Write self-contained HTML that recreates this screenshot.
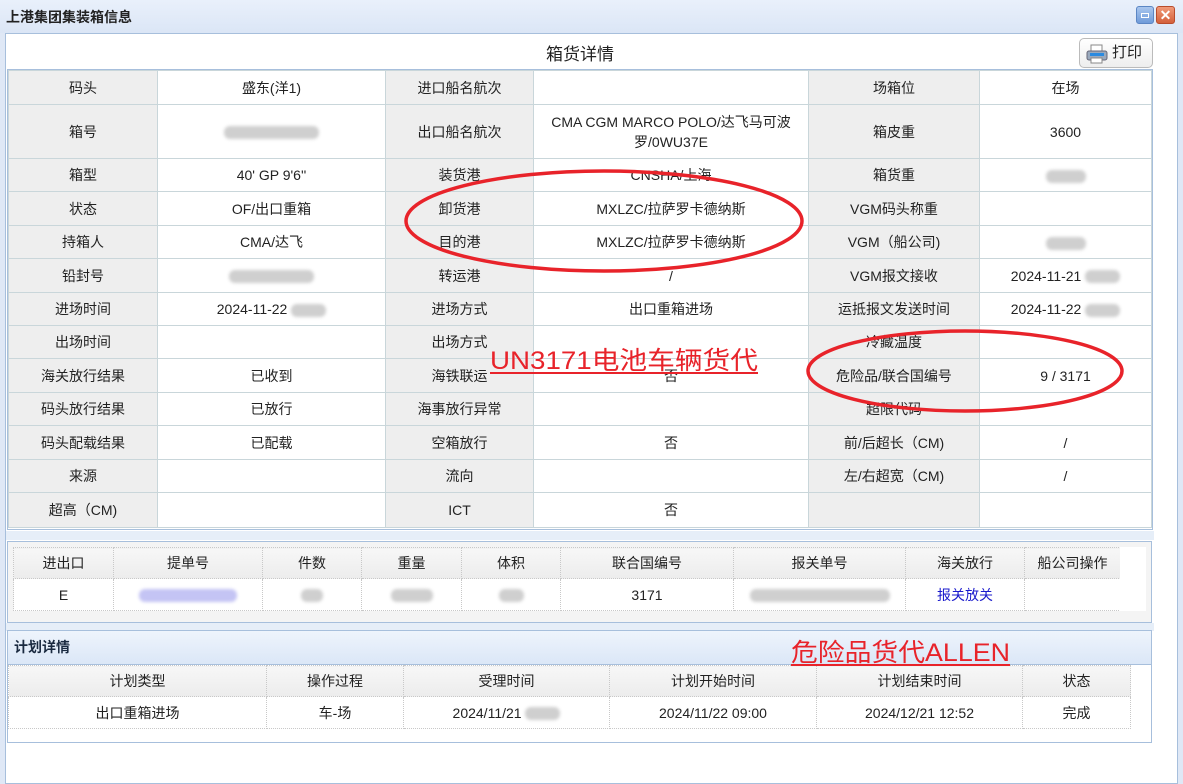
<!DOCTYPE html>
<html><head><meta charset="utf-8"><style>
*{margin:0;padding:0;box-sizing:border-box}
body{width:1183px;height:784px;overflow:hidden;background:#dfe8f6;font-family:"Liberation Sans","Noto Sans CJK SC",sans-serif;font-size:14px;color:#222;position:relative}
.abs{position:absolute}
table{border-collapse:collapse;table-layout:fixed}
#main td{border:1px solid #c9d6da;text-align:center;font-size:14px}
#main td.l{background:#eeeeee}
#main td.v{background:#fff}
.g td,.g th{border:1px dotted #c8c8c8;text-align:center;font-weight:normal;font-size:14px}
.g th{background:linear-gradient(#f7f7f7,#ececec);height:31px}
.g td{background:#fff;height:32px}
.blur{display:inline-block;height:13px;background:#cfcfcf;border-radius:6px;vertical-align:middle;filter:blur(1.5px)}
</style></head><body>
<div class="abs" style="left:0;top:0;width:1183px;height:33px;background:linear-gradient(#e9f0fb,#dbe6f6)"></div>
<div class="abs" style="left:6px;top:7px;font-size:14px;font-weight:bold;color:#222">上港集团集装箱信息</div>
<div class="abs" style="left:1136px;top:6px;width:18px;height:18px;border-radius:3px;background:linear-gradient(#a9c6ee,#6f9bd9);border:1px solid #5b86c4"><div style="margin:6px 4px;height:5px;border:1px solid #fff"></div></div>
<div class="abs" style="left:1156px;top:6px;width:19px;height:18px;border-radius:3px;background:linear-gradient(#f09a7a,#d4603b);border:1px solid #b84c2c;color:#fff;font-weight:bold;font-size:14px;line-height:16px;text-align:center">✕</div>
<div class="abs" style="left:5px;top:33px;width:1173px;height:751px;background:#fff;border:1px solid #a7bfdc"></div>
<div class="abs" style="left:6px;top:40px;width:1148px;text-align:center;font-size:17px">箱货详情</div>
<div class="abs" style="left:1079px;top:38px;width:74px;height:30px;border:1px solid #bbb;border-radius:5px;background:linear-gradient(#fff,#eee);font-size:15px;line-height:28px;padding-left:32px">打印
<svg class="abs" style="left:6px;top:5px" width="22" height="20" viewBox="0 0 22 20"><rect x="5" y="1" width="11" height="7" fill="#fff" stroke="#888"/><rect x="1" y="7" width="20" height="9" rx="2" fill="#9aa9bd" stroke="#667"/><rect x="4" y="9" width="14" height="3" fill="#2a8ae0"/><rect x="5" y="14" width="11" height="5" fill="#fff" stroke="#888"/></svg></div>
<div class="abs" style="left:7px;top:69px;width:1146px;height:461px;border:1px solid #a7bfdc"></div>
<table id="main" class="abs" style="left:8px;top:70px;width:1143px">
<colgroup><col style="width:149px"><col style="width:228px"><col style="width:148px"><col style="width:275px"><col style="width:171px"><col style="width:172px"></colgroup>
<tr style="height:34px"><td class="l">码头</td><td class="v">盛东(洋1)</td><td class="l">进口船名航次</td><td class="v"></td><td class="l">场箱位</td><td class="v">在场</td></tr>
<tr style="height:54px"><td class="l">箱号</td><td class="v"><span class="blur" style="width:95px"></span></td><td class="l">出口船名航次</td><td class="v" style="line-height:20px">CMA CGM MARCO POLO/达飞马可波<br>罗/0WU37E</td><td class="l">箱皮重</td><td class="v">3600</td></tr>
<tr style="height:33px"><td class="l">箱型</td><td class="v">40' GP 9'6''</td><td class="l">装货港</td><td class="v">CNSHA/上海</td><td class="l">箱货重</td><td class="v"><span class="blur" style="width:40px"></span></td></tr>
<tr style="height:34px"><td class="l">状态</td><td class="v">OF/出口重箱</td><td class="l">卸货港</td><td class="v">MXLZC/拉萨罗卡德纳斯</td><td class="l">VGM码头称重</td><td class="v"></td></tr>
<tr style="height:33px"><td class="l">持箱人</td><td class="v">CMA/达飞</td><td class="l">目的港</td><td class="v">MXLZC/拉萨罗卡德纳斯</td><td class="l">VGM（船公司)</td><td class="v"><span class="blur" style="width:40px"></span></td></tr>
<tr style="height:34px"><td class="l">铅封号</td><td class="v"><span class="blur" style="width:85px"></span></td><td class="l">转运港</td><td class="v">/</td><td class="l">VGM报文接收</td><td class="v">2024-11-21 <span class="blur" style="width:35px"></span></td></tr>
<tr style="height:33px"><td class="l">进场时间</td><td class="v">2024-11-22 <span class="blur" style="width:35px"></span></td><td class="l">进场方式</td><td class="v">出口重箱进场</td><td class="l">运抵报文发送时间</td><td class="v">2024-11-22 <span class="blur" style="width:35px"></span></td></tr>
<tr style="height:33px"><td class="l">出场时间</td><td class="v"></td><td class="l">出场方式</td><td class="v"></td><td class="l">冷藏温度</td><td class="v"></td></tr>
<tr style="height:34px"><td class="l">海关放行结果</td><td class="v">已收到</td><td class="l">海铁联运</td><td class="v">否</td><td class="l">危险品/联合国编号</td><td class="v">9 / 3171</td></tr>
<tr style="height:33px"><td class="l">码头放行结果</td><td class="v">已放行</td><td class="l">海事放行异常</td><td class="v"></td><td class="l">超限代码</td><td class="v"></td></tr>
<tr style="height:34px"><td class="l">码头配载结果</td><td class="v">已配载</td><td class="l">空箱放行</td><td class="v">否</td><td class="l">前/后超长（CM)</td><td class="v">/</td></tr>
<tr style="height:33px"><td class="l">来源</td><td class="v"></td><td class="l">流向</td><td class="v"></td><td class="l">左/右超宽（CM)</td><td class="v">/</td></tr>
<tr style="height:35px"><td class="l">超高（CM)</td><td class="v"></td><td class="l">ICT</td><td class="v">否</td><td class="l"></td><td class="v"></td></tr>
</table>
<div class="abs" style="left:6px;top:531px;width:1148px;height:9px;background:#e6eef8"></div>
<div class="abs" style="left:7px;top:541px;width:1145px;height:82px;border:1px solid #a7bfdc;background:#f4f4f4"></div>
<table class="g abs" style="left:13px;top:547px;width:1107px">
<colgroup><col style="width:100px"><col style="width:149px"><col style="width:99px"><col style="width:100px"><col style="width:99px"><col style="width:173px"><col style="width:172px"><col style="width:119px"><col style="width:96px"></colgroup>
<tr><th>进出口</th><th>提单号</th><th>件数</th><th>重量</th><th>体积</th><th>联合国编号</th><th>报关单号</th><th>海关放行</th><th>船公司操作</th></tr>
<tr><td>E</td><td><span class="blur" style="width:98px;background:#c4c4f4"></span></td><td><span class="blur" style="width:22px"></span></td><td><span class="blur" style="width:42px"></span></td><td><span class="blur" style="width:25px"></span></td><td>3171</td><td><span class="blur" style="width:140px"></span></td><td style="color:#1a1acc">报关放关</td><td></td></tr>
</table>
<div class="abs" style="left:1120px;top:547px;width:26px;height:64px;background:#fff"></div>
<div class="abs" style="left:6px;top:623px;width:1148px;height:8px;background:#e6eef8"></div>
<div class="abs" style="left:7px;top:630px;width:1145px;height:113px;border:1px solid #a7bfdc;background:#fff"></div>
<div class="abs" style="left:8px;top:631px;width:1143px;height:34px;background:linear-gradient(#eef4fc,#dbe7f7);border-bottom:1px solid #a7bfdc;font-weight:bold;font-size:14px;line-height:33px;padding-left:6px;color:#1a2a40">计划详情</div>
<table class="g abs" style="left:8px;top:665px;width:1122px">
<colgroup><col style="width:258px"><col style="width:137px"><col style="width:206px"><col style="width:207px"><col style="width:206px"><col style="width:108px"></colgroup>
<tr><th>计划类型</th><th>操作过程</th><th>受理时间</th><th>计划开始时间</th><th>计划结束时间</th><th>状态</th></tr>
<tr><td>出口重箱进场</td><td>车-场</td><td>2024/11/21 <span class="blur" style="width:35px"></span></td><td>2024/11/22 09:00</td><td>2024/12/21 12:52</td><td>完成</td></tr>
</table>
<svg class="abs" style="left:0;top:0" width="1183" height="784">
<ellipse cx="604" cy="221" rx="198" ry="50" fill="none" stroke="#e8232a" stroke-width="3.5"/>
<ellipse cx="965" cy="371" rx="157" ry="40" fill="none" stroke="#e8232a" stroke-width="3.5"/>
<text x="490" y="369" font-size="25" textLength="268" lengthAdjust="spacingAndGlyphs" fill="#e8232a" font-family="Liberation Sans,Noto Sans CJK SC,sans-serif">UN3171电池车辆货代</text>
<line x1="490" y1="373" x2="758" y2="373" stroke="#e8232a" stroke-width="2"/>
<text x="791" y="661" font-size="25" textLength="219" lengthAdjust="spacingAndGlyphs" fill="#e8232a" font-family="Liberation Sans,Noto Sans CJK SC,sans-serif">危险品货代ALLEN</text>
<line x1="791" y1="665" x2="1010" y2="665" stroke="#e8232a" stroke-width="2"/>
</svg>
</body></html>
